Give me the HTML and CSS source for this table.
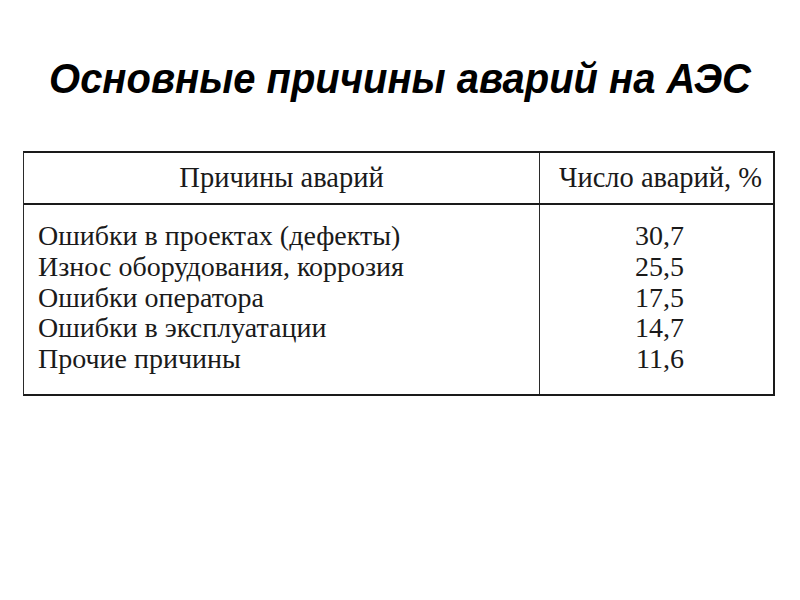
FILE: index.html
```html
<!DOCTYPE html>
<html lang="ru">
<head>
<meta charset="utf-8">
<link rel="stylesheet" href="styles.css">
</head>
<body>
<div class="slide">
  <h1 class="title"><span class="title-text">Основные причины аварий на АЭС</span></h1>
  <div class="table">
    <div class="head">
      <div class="col-cause head-cell">Причины аварий</div>
      <div class="col-num head-cell">Число аварий, %</div>
    </div>
    <div class="body">
      <div class="col-cause body-cell">
        <div class="row">Ошибки в проектах (дефекты)</div>
        <div class="row">Износ оборудования, коррозия</div>
        <div class="row">Ошибки оператора</div>
        <div class="row">Ошибки в эксплуатации</div>
        <div class="row">Прочие причины</div>
      </div>
      <div class="col-num body-cell nums">
        <div class="row">30,7</div>
        <div class="row">25,5</div>
        <div class="row">17,5</div>
        <div class="row">14,7</div>
        <div class="row">11,6</div>
      </div>
    </div>
  </div>
</div>
</body>
</html>
```

FILE: styles.css
```css
html, body {
  margin: 0;
  padding: 0;
  background: #ffffff;
}
*, *::before, *::after {
  box-sizing: border-box;
}
.slide {
  width: 800px;
  height: 600px;
  display: flex;
  flex-direction: column;
  align-items: flex-start;
}
.title {
  margin: 55px 0 0 0;
  width: 800px;
  text-align: center;
  font-family: "Liberation Sans", Arial, sans-serif;
  font-weight: bold;
  font-style: italic;
  font-size: 42px;
  line-height: 48px;
  color: #000;
}
.title-text {
  display: inline-block;
  transform: scaleX(0.951);
}
.table {
  margin: 48px 0 0 23px;
  width: 752px;
  border-top: 2px solid #1a1a1a;
  border-left: 1px solid #2a2a2a;
  border-right: 2px solid #1a1a1a;
  border-bottom: 2px solid #1a1a1a;
  font-family: "Liberation Serif", "Times New Roman", serif;
  color: #1a1a1a;
  font-size: 28px;
}
.head {
  display: flex;
  height: 52px;
  border-bottom: 2px solid #1a1a1a;
}
.body {
  display: flex;
  height: 189px;
}
.col-cause {
  width: 516px;
  border-right: 1px solid #2a2a2a;
}
.col-num {
  flex: 1;
}
.head-cell {
  display: flex;
  align-items: center;
  justify-content: center;
  font-size: 28.5px;
}
.head .col-num {
  padding-left: 8px;
}
.body-cell {
  padding: 16px 0 0 14px;
}
.nums {
  padding: 16px 89px 0 0;
  display: flex;
  flex-direction: column;
  align-items: flex-end;
}
.row {
  height: 30.75px;
  line-height: 30.75px;
  white-space: nowrap;
}
```
